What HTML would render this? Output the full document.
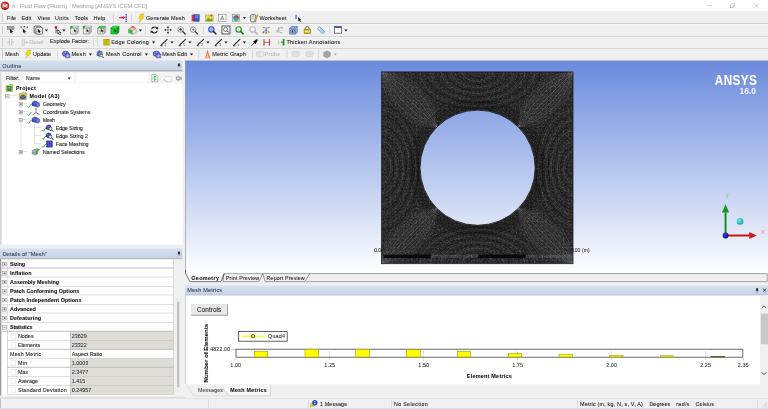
<!DOCTYPE html>
<html>
<head>
<meta charset="utf-8">
<title>Meshing</title>
<style>
html,body{margin:0;padding:0;background:#f0f0f0;overflow:hidden;}
body{width:768px;height:409px;position:relative;}
#w{position:absolute;left:0;top:0;width:1920px;height:1022.5px;transform:scale(0.4);transform-origin:0 0;filter:contrast(1.0001);font-family:"Liberation Sans",sans-serif;font-size:13.25px;color:#1c1c1c;background:#f0f0f0;overflow:hidden;-webkit-text-stroke:0.2px currentColor;}
#w div,#w span.a,#w svg{position:absolute;box-sizing:border-box;white-space:nowrap;}
#w svg{overflow:visible;}
.hdr{background:linear-gradient(#d5e1ef,#c3d3e6);}
</style>
</head>
<body>
<div id="w">
<!-- s_title -->
<div style="left:0px;top:0px;width:1920px;height:29px;background:#fff"></div>
<svg style="left:2.25px;top:3.75px;width:21px;height:21px" viewBox="0 0 18 18"><defs><radialGradient id="mg" cx="0.45" cy="0.3" r="0.75"><stop offset="0" stop-color="#ee3a30"/><stop offset="0.6" stop-color="#d21f18"/><stop offset="1" stop-color="#8e0f0c"/></radialGradient></defs><circle cx="9" cy="9" r="8.6" fill="url(#mg)"/><circle cx="9" cy="9" r="8.4" fill="none" stroke="#8a1610" stroke-width="0.9"/><ellipse cx="7.5" cy="5.5" rx="5" ry="3" fill="#fff" opacity="0.18"/><path d="M4 13.2V5h2.3L9 9.4 11.7 5H14v8.2h-2V8.5L9.6 12.3H8.4L6 8.5v4.7z" fill="#fff"/></svg>
<div style="left:28.5px;top:6.85px;font-size:14.5px;line-height:16.825px;color:#adadad;letter-spacing:-0.083px;">A : Fluid Flow (Fluent) - Meshing [ANSYS ICEM CFD]</div>
<div style="left:1768.5px;top:14.25px;width:10.5px;height:1px;background:#8a8a8a"></div>
<div style="left:1826px;top:11.5px;width:8.5px;height:8.5px;border:1px solid #8a8a8a"></div>
<div style="left:1828.75px;top:8.75px;width:8.5px;height:8.5px;border-top:1px solid #8a8a8a;border-right:1px solid #8a8a8a"></div>
<svg style="left:1886px;top:9px;width:11px;height:11px" viewBox="0 0 11 11"><path d="M0.5 0.5L10.5 10.5M10.5 0.5L0.5 10.5" stroke="#8a8a8a" stroke-width="1"/></svg>
<!-- s_toolbar -->
<div style="left:0px;top:29px;width:1920px;height:122px;background:#f0f0f0"></div>
<div style="left:0px;top:57.75px;width:1920px;height:1.75px;background:#c6c6c6"></div>
<div style="left:0px;top:59.5px;width:1920px;height:1.25px;background:#fafafa"></div>
<div style="left:0px;top:90.25px;width:1920px;height:1.75px;background:#c6c6c6"></div>
<div style="left:0px;top:92px;width:1920px;height:1.25px;background:#fafafa"></div>
<div style="left:0px;top:120px;width:1920px;height:1.75px;background:#c6c6c6"></div>
<div style="left:0px;top:121.75px;width:1920px;height:1.25px;background:#fafafa"></div>
<div style="left:0px;top:28.75px;width:1920px;height:1px;background:#e2e2e2"></div>
<div style="left:5px;top:34.75px;width:1.25px;height:20.5px;background:#9a9a9a"></div>
<div style="left:5px;top:65px;width:1.25px;height:20.5px;background:#9a9a9a"></div>
<div style="left:5px;top:95.25px;width:1.25px;height:20.5px;background:#9a9a9a"></div>
<div style="left:5px;top:125.25px;width:1.25px;height:20.5px;background:#9a9a9a"></div>
<div style="left:17.5px;top:37.025px;font-size:13.75px;line-height:15.95px;letter-spacing:0.085px;">File</div>
<div style="left:53.75px;top:37.025px;font-size:13.75px;line-height:15.95px;letter-spacing:0.328px;">Edit</div>
<div style="left:94px;top:37.025px;font-size:13.75px;line-height:15.95px;letter-spacing:0.36px;">View</div>
<div style="left:137.5px;top:37.025px;font-size:13.75px;line-height:15.95px;letter-spacing:0.735px;">Units</div>
<div style="left:186.5px;top:37.025px;font-size:13.75px;line-height:15.95px;letter-spacing:0.28px;">Tools</div>
<div style="left:234px;top:37.025px;font-size:13.75px;line-height:15.95px;letter-spacing:0.305px;">Help</div>
<div style="left:282.5px;top:34.5px;width:1px;height:21px;background:#b4b4b4"></div>
<svg style="left:297.5px;top:35px;width:21px;height:20px" viewBox="0 0 8.4 8"><path d="M0 3.6h4.4" stroke="#e02020" stroke-width="1.3"/><path d="M3.6 1.8L6 3.6 3.6 5.4z" fill="#e02020"/><path d="M7 0v8" stroke="#2030e0" stroke-width="1.3" stroke-dasharray="1.6 0.7"/></svg>
<div style="left:329px;top:34.5px;width:1px;height:21px;background:#b4b4b4"></div>
<svg style="left:344.5px;top:34.5px;width:16px;height:21px" viewBox="0 0 6.4 8.4"><path d="M2.6 0H6L4.4 2.9H6.2L1.2 8.4 2.4 4.6H0.6z" fill="#f5d90a" stroke="#b79a00" stroke-width="0.35"/></svg>
<div style="left:365px;top:37.025px;font-size:13.75px;line-height:15.95px;letter-spacing:0.17px;">Generate Mesh</div>
<svg style="left:478.5px;top:35px;width:20px;height:20px" viewBox="0 0 8 8"><rect x="0" y="0.6" width="3" height="6.8" fill="#d43a3a"/><rect x="2.4" y="0.6" width="5.2" height="6.8" fill="#3a56d4" stroke="#1c2c80" stroke-width="0.4"/><path d="M3.6 2h3M3.6 3.4h3" stroke="#cfd6ff" stroke-width="0.5"/></svg>
<svg style="left:512.5px;top:35px;width:21px;height:20px" viewBox="0 0 8.4 8"><rect x="0.3" y="1" width="7.6" height="6.4" fill="#e8d84a" stroke="#9c8e20" stroke-width="0.4"/><path d="M0.6 7L3 3.4 5 5.6 6.4 4.2 7.6 7z" fill="#5aa83c"/><circle cx="6" cy="1.6" r="1.1" fill="#e24a3a"/></svg>
<svg style="left:545px;top:35px;width:21.5px;height:20px" viewBox="0 0 8.6 8"><rect x="0.4" y="0.6" width="7.6" height="6.8" fill="#fafafa" stroke="#8a8a8a" stroke-width="0.6"/><path d="M2.4 6.2L4.2 1.8 6 6.2M3 4.8h2.4" stroke="#555" stroke-width="0.6" fill="none"/></svg>
<svg style="left:580px;top:35px;width:20.5px;height:20px" viewBox="0 0 8.2 8"><rect x="0.3" y="0.6" width="7.4" height="6.8" fill="#dcdcdc" stroke="#777" stroke-width="0.5"/><circle cx="4" cy="4" r="2.7" fill="#3b7fe0"/><path d="M4 4L4 1.3A2.7 2.7 0 0 1 6.5 5z" fill="#e03b3b"/><path d="M4 4L6.5 5A2.7 2.7 0 0 1 1.7 5.4z" fill="#3bc04a"/></svg>
<svg style="left:606.5px;top:43.25px;width:8px;height:4.5px" viewBox="0 0 3.2 1.8"><path d="M0 0H3.2L1.6 1.8z" fill="#111"/></svg>
<svg style="left:624.5px;top:34.5px;width:20.5px;height:21px" viewBox="0 0 8.2 8.4"><rect x="0.6" y="0.8" width="5.2" height="7" rx="0.8" fill="#f4f4f4" stroke="#333" stroke-width="0.7"/><path d="M1.8 2.8h2.8M1.8 4.4h2.8" stroke="#777" stroke-width="0.5"/><path d="M4.2 6.8L7.4 0.6l0.8 0.5L5 7.4z" fill="#e8c420" stroke="#6a5a00" stroke-width="0.3"/></svg>
<div style="left:649px;top:37.025px;font-size:13.75px;line-height:15.95px;letter-spacing:0.17px;">Worksheet</div>
<svg style="left:737.5px;top:36px;width:17.5px;height:19px" viewBox="0 0 7 7.6"><rect x="0.2" y="0.4" width="1.3" height="4.2" fill="#4a5cf0"/><path d="M2.8 2.6L6.2 5.8 4.9 5.9 5.6 7.3 4.9 7.6 4.2 6.2 3.2 7z" fill="#111"/></svg>
<svg style="left:17px;top:65.25px;width:20px;height:20px" viewBox="0 0 8 8"><rect x="0.4" y="0.4" width="6.8" height="3" fill="#9a9a9a" stroke="#555" stroke-width="0.4"/><path d="M1.4 1.2h4.8M1.4 2.4h4.8" stroke="#ddd" stroke-width="0.4" stroke-dasharray="0.8 0.6"/><path d="M3.2 2.8L6.6 6 5.1 6 5.8 7.4 5.1 7.7 4.4 6.3 3.2 7.1z" fill="#222"/></svg>
<svg style="left:49.5px;top:65.25px;width:21.5px;height:20px" viewBox="0 0 8.6 8"><path d="M1.2 1.4L2.4 2.6M7.2 1.4L6 2.6M4.3 0.6V2" stroke="#555" stroke-width="0.5"/><rect x="0.5" y="0.5" width="1.2" height="1.2" fill="#444"/><rect x="6.8" y="0.5" width="1.2" height="1.2" fill="#444"/><rect x="3.7" y="0" width="1.2" height="1.1" fill="#444"/><path d="M3 2.8L6.2 5.8 4.8 5.8 5.5 7.2 4.8 7.5 4.1 6.1 3 6.9z" fill="#1c1c1c"/></svg>
<svg style="left:84px;top:64.25px;width:24px;height:22px" viewBox="0 0 9.6 8.8"><rect x="0.5" y="0.5" width="6.6" height="7" rx="1" fill="#f2f2f2" stroke="#333" stroke-width="0.7"/><rect x="2.3" y="1.6" width="6.6" height="7" rx="1" fill="#f2f2f2" stroke="#333" stroke-width="0.7"/><path d="M4.2 3.2L7.4 6.2 6 6.2 6.6 7.5 6 7.7 5.4 6.5 4.2 7.2z" fill="#111"/></svg>
<svg style="left:111.5px;top:74px;width:8px;height:4.5px" viewBox="0 0 3.2 1.8"><path d="M0 0H3.2L1.6 1.8z" fill="#111"/></svg>
<svg style="left:136px;top:64.75px;width:18.5px;height:21.5px" viewBox="0 0 7.4 8.6"><rect x="0.4" y="0.2" width="2.4" height="2.4" fill="#c81e2a"/><path d="M1.6 2.4V7.4" stroke="#333" stroke-width="0.7"/><path d="M1.6 4.6H3.4" stroke="#333" stroke-width="0.6"/><path d="M3.4 3.6V7.6H5.2M3.4 3.6L6.2 6.4" fill="none" stroke="#222" stroke-width="0.7"/><rect x="4.6" y="6.4" width="1.8" height="2" fill="#fff" stroke="#222" stroke-width="0.5"/></svg>
<svg style="left:156px;top:74px;width:8px;height:4.5px" viewBox="0 0 3.2 1.8"><path d="M0 0H3.2L1.6 1.8z" fill="#111"/></svg>
<svg style="left:174.5px;top:64.25px;width:23.5px;height:22px" viewBox="0 0 9.4 8.8"><path d="M0.5 2.6L2.4 0.6H8.6V6.4L6.8 8.4H0.5z" fill="#e9e9e9" stroke="#6e6e6e" stroke-width="0.55" stroke-linejoin="round"/><path d="M0.5 2.6L2.4 0.6H8.6L6.8 2.6z" fill="#d6d6d6"/><path d="M6.8 2.6L8.6 0.6V6.4L6.8 8.4z" fill="#bdbdbd"/><path d="M0.5 2.6H6.8V8.4M6.8 2.6L8.6 0.6" fill="none" stroke="#6e6e6e" stroke-width="0.45"/><rect x="0.2" y="0.4" width="2.4" height="2.4" fill="#19b52b"/><path d="M4 3.4L6.4 5.7 5.3 5.7 5.8 6.8 5.3 7 4.8 5.9 4 6.5z" fill="#111"/></svg>
<svg style="left:206.5px;top:64.25px;width:23.5px;height:22px" viewBox="0 0 9.4 8.8"><path d="M0.5 2.6L2.4 0.6H8.6V6.4L6.8 8.4H0.5z" fill="#e9e9e9" stroke="#6e6e6e" stroke-width="0.55" stroke-linejoin="round"/><path d="M0.5 2.6L2.4 0.6H8.6L6.8 2.6z" fill="#d6d6d6"/><path d="M6.8 2.6L8.6 0.6V6.4L6.8 8.4z" fill="#bdbdbd"/><path d="M0.5 2.6H6.8V8.4M6.8 2.6L8.6 0.6" fill="none" stroke="#6e6e6e" stroke-width="0.45"/><path d="M0.3 2.6L2.2 0.6" stroke="#19b52b" stroke-width="1.3"/><rect x="0.1" y="0.2" width="2" height="2" fill="#19b52b"/><path d="M3.6 2.8V8.2" stroke="#888" stroke-width="0.4"/><path d="M4 3.4L6.4 5.7 5.3 5.7 5.8 6.8 5.3 7 4.8 5.9 4 6.5z" fill="#111"/></svg>
<div style="left:238.5px;top:61.75px;width:29.5px;height:27px;background:#fcfcfc;border:1px solid #d2d2d2"></div>
<svg style="left:242.5px;top:64.25px;width:23.5px;height:22px" viewBox="0 0 9.4 8.8"><path d="M0.5 2.6L2.4 0.6H8.6V6.4L6.8 8.4H0.5z" fill="#e9e9e9" stroke="#6e6e6e" stroke-width="0.55" stroke-linejoin="round"/><path d="M0.5 2.6L2.4 0.6H8.6L6.8 2.6z" fill="#d6d6d6"/><path d="M6.8 2.6L8.6 0.6V6.4L6.8 8.4z" fill="#bdbdbd"/><path d="M0.5 2.6H6.8V8.4M6.8 2.6L8.6 0.6" fill="none" stroke="#6e6e6e" stroke-width="0.45"/><path d="M0.5 2.6L2.4 0.6H8.6L6.8 2.6z" fill="#22c636"/><path d="M3.4 2.8V8.2M0.6 5.2H6.8" stroke="#777" stroke-width="0.4"/><path d="M4 3.4L6.4 5.7 5.3 5.7 5.8 6.8 5.3 7 4.8 5.9 4 6.5z" fill="#111"/></svg>
<svg style="left:275.5px;top:64.25px;width:23.5px;height:22px" viewBox="0 0 9.4 8.8"><path d="M0.5 2.6L2.4 0.6H8.6V6.4L6.8 8.4H0.5z" fill="#18d030" stroke="#0b7a1a" stroke-width="0.55" stroke-linejoin="round"/><path d="M0.5 2.6L2.4 0.6H8.6L6.8 2.6z" fill="#3de050"/><path d="M6.8 2.6L8.6 0.6V6.4L6.8 8.4z" fill="#0f9a22"/><path d="M0.5 2.6H6.8V8.4M6.8 2.6L8.6 0.6" fill="none" stroke="#0b7a1a" stroke-width="0.45"/><path d="M4 3.4L6.4 5.7 5.3 5.7 5.8 6.8 5.3 7 4.8 5.9 4 6.5z" fill="#111"/></svg>
<svg style="left:319.5px;top:64.25px;width:22px;height:22px" viewBox="0 0 8.8 8.8"><path d="M0.6 3.4L4 2 8 3.2V7L4.6 8.6 0.6 7.2z" fill="#f4f4f4" stroke="#666" stroke-width="0.4"/><path d="M0.6 3.4L4.6 4.6V8.6L0.6 7.2z" fill="#2fb84a"/><path d="M4.6 4.6L8 3.2V7L4.6 8.6z" fill="#e8e8e8" stroke="#666" stroke-width="0.3"/><path d="M2.2 1.4L5 0.4 7.4 1.6 4.6 2.8z" fill="#e04848"/><path d="M0.6 3.4L4 2 8 3.2 4.6 4.6z" fill="#f8d0d0" stroke="#c44" stroke-width="0.3"/></svg>
<svg style="left:346.5px;top:74px;width:8px;height:4.5px" viewBox="0 0 3.2 1.8"><path d="M0 0H3.2L1.6 1.8z" fill="#111"/></svg>
<div style="left:363px;top:64.75px;width:1px;height:21px;background:#b4b4b4"></div>
<svg style="left:375.5px;top:65.25px;width:20px;height:20px" viewBox="0 0 8 8"><path d="M6.6 2.4A3 3 0 0 0 1.2 3.2" fill="none" stroke="#222" stroke-width="1.2"/><path d="M5.2 2.8L7.8 0.8 7.8 3.6z" fill="#222"/><path d="M1.4 5.6A3 3 0 0 0 6.8 4.8" fill="none" stroke="#222" stroke-width="1.2"/><path d="M2.8 5.2L0.2 7.2 0.2 4.4z" fill="#222"/></svg>
<svg style="left:409.5px;top:65.25px;width:20px;height:20px" viewBox="0 0 8 8"><path d="M4 0L5.3 1.8H2.7zM4 8L5.3 6.2H2.7zM0 4L1.8 2.7V5.3zM8 4L6.2 2.7V5.3z" fill="#222"/><path d="M4 1.6V6.4M1.6 4H6.4" stroke="#222" stroke-width="0.7" stroke-dasharray="0.9 0.6"/></svg>
<svg style="left:442.5px;top:64.75px;width:21.5px;height:21.5px" viewBox="0 0 8.6 8.6"><circle cx="3.4" cy="3.4" r="2.8" fill="#fafafa" stroke="#7a7a7a" stroke-width="0.8"/><circle cx="3.4" cy="3.4" r="1.2" fill="#222"/><path d="M5.5 5.5L8 8" stroke="#333" stroke-width="1.3" stroke-linecap="round"/></svg>
<svg style="left:474px;top:64.75px;width:21.5px;height:21.5px" viewBox="0 0 8.6 8.6"><rect x="0.2" y="0.2" width="4" height="4" fill="none" stroke="#999" stroke-width="0.35" stroke-dasharray="0.8 0.5"/><circle cx="3.6" cy="3.6" r="2.7" fill="#fafafa" stroke="#7a7a7a" stroke-width="0.8"/><path d="M3.6 2.2V5M2.2 3.6H5" stroke="#444" stroke-width="0.6"/><path d="M5.6 5.6L8.1 8.1" stroke="#333" stroke-width="1.3" stroke-linecap="round"/></svg>
<div style="left:508.5px;top:64.75px;width:1px;height:21px;background:#b4b4b4"></div>
<svg style="left:520px;top:64.75px;width:21px;height:21px" viewBox="0 0 8.4 8.4"><circle cx="3.4" cy="3.4" r="2.7" fill="#9fb4ec" stroke="#3a5ec0" stroke-width="1.1"/><path d="M5.4 5.4L7.9 7.9" stroke="#333" stroke-width="1.5" stroke-linecap="round"/></svg>
<svg style="left:553.5px;top:64.25px;width:22px;height:22px" viewBox="0 0 8.8 8.8"><rect x="0.4" y="0.4" width="8" height="8" fill="#fafafa" stroke="#333" stroke-width="0.8"/><circle cx="4" cy="3.8" r="2" fill="none" stroke="#444" stroke-width="0.7"/><path d="M5.4 5.2L7.2 7" stroke="#333" stroke-width="1"/></svg>
<svg style="left:587.5px;top:64.75px;width:21px;height:21px" viewBox="0 0 8.4 8.4"><circle cx="3.4" cy="3.4" r="2.7" fill="#e9f7ea" stroke="#1e9a2c" stroke-width="1.1"/><path d="M5.4 5.4L7.9 7.9" stroke="#146c1e" stroke-width="1.5" stroke-linecap="round"/></svg>
<svg style="left:622.5px;top:64.75px;width:21px;height:21px" viewBox="0 0 8.4 8.4"><circle cx="3.4" cy="3.4" r="2.7" fill="#f6f6f6" stroke="#b8b8b8" stroke-width="1.1"/><path d="M5.4 5.4L7.9 7.9" stroke="#b8b8b8" stroke-width="1.5" stroke-linecap="round"/></svg>
<svg style="left:655px;top:65.25px;width:21px;height:20px" viewBox="0 0 8.4 8"><path d="M1 1.6h2.6M4.6 1.6h2.8" stroke="#4b8a4b" stroke-width="1.1" stroke-dasharray="0.8 0.4"/><path d="M4.2 2V7M1.4 6L4.2 4 7 6" stroke="#444" stroke-width="0.5" fill="none"/><circle cx="4.2" cy="4" r="1" fill="#2e8ee0"/><circle cx="1.4" cy="6.2" r="0.95" fill="#e03434"/><circle cx="7" cy="6.2" r="0.95" fill="#e0a020"/><circle cx="4.2" cy="7" r="0.9" fill="#30b040"/></svg>
<svg style="left:689px;top:66.25px;width:21.5px;height:18.5px" viewBox="0 0 8.6 7.4"><path d="M1.6 6.4L3.2 0.8M0.4 4.6h3.2" stroke="#a6a6a6" stroke-width="0.9" fill="none"/><path d="M6.6 1.4A2.6 2.6 0 1 0 6.8 6" stroke="#a6a6a6" stroke-width="0.9" fill="none"/><path d="M6 0.4L7.8 1.6 6 2.8z" fill="#a6a6a6"/></svg>
<svg style="left:722.5px;top:64.75px;width:21.5px;height:21.5px" viewBox="0 0 8.6 8.6"><path d="M0.4 2.2L2.4 0.4H8.2V6.2L6.2 8.2H0.4z" fill="#8fb0e6" stroke="#3a5a9c" stroke-width="0.5"/><path d="M0.4 2.2H6.2V8.2M6.2 2.2L8.2 0.4" fill="none" stroke="#3a5a9c" stroke-width="0.4"/><ellipse cx="3.4" cy="5.2" rx="2.4" ry="1.5" fill="#e8f0ff" stroke="#1c2c50" stroke-width="0.5"/><circle cx="3.4" cy="5.2" r="1" fill="#1c2c50"/></svg>
<svg style="left:759px;top:65.25px;width:18px;height:20px" viewBox="0 0 7.2 8"><path d="M1.8 3.6V2.4A1.8 1.8 0 0 1 5.4 2.4V3.6" fill="none" stroke="#555" stroke-width="0.9"/><rect x="0.5" y="3.4" width="6.2" height="4.2" fill="#d8c82a" stroke="#5a5200" stroke-width="0.5"/><path d="M0.8 5.2h5.6" stroke="#f6ee90" stroke-width="0.8"/></svg>
<svg style="left:792px;top:64.75px;width:21.5px;height:21.5px" viewBox="0 0 8.6 8.6"><path d="M0.6 2.8L2.8 0.6 8 5.8 5.8 8z" fill="#9fd0f0" stroke="#5a8ab0" stroke-width="0.5"/><path d="M0.4 0.4L2.2 2.2" stroke="#999" stroke-width="0.5"/><circle cx="2.4" cy="2.4" r="0.6" fill="#fff"/></svg>
<div style="left:823.5px;top:64.75px;width:1px;height:21px;background:#b4b4b4"></div>
<svg style="left:835px;top:65.25px;width:20px;height:19px" viewBox="0 0 8 7.6"><rect x="0.4" y="0.4" width="7" height="6.8" fill="#fdfdfd" stroke="#40406a" stroke-width="0.7"/><rect x="0.4" y="0.4" width="7" height="1.6" fill="#4a56a8"/></svg>
<svg style="left:860.5px;top:74px;width:8px;height:4.5px" viewBox="0 0 3.2 1.8"><path d="M0 0H3.2L1.6 1.8z" fill="#111"/></svg>
<svg style="left:17.5px;top:95.5px;width:16.5px;height:20px" viewBox="0 0 6.6 8"><path d="M2.2 1v6.2M4.4 0.6v6.8" stroke="#b0b0b0" stroke-width="0.9" stroke-dasharray="1.2 0.5"/><path d="M0.4 3.2L2 4.2 0.4 5.2zM6.4 3.2L4.8 4.2 6.4 5.2z" fill="#b8b8b8"/></svg>
<svg style="left:52.5px;top:97px;width:17.5px;height:17.5px" viewBox="0 0 7 7"><path d="M1 0.6h2.4V6.4H1z" fill="#e6e6e6" stroke="#bdbdbd" stroke-width="0.5"/><path d="M3 3.4h3.4M5 2L6.6 3.4 5 4.8" stroke="#b4b4b4" stroke-width="0.7" fill="none"/></svg>
<div style="left:73px;top:97.525px;font-size:13.75px;line-height:15.95px;color:#b9b9b9;">Reset</div>
<div style="left:125px;top:96.025px;font-size:13.75px;line-height:15.95px;color:#222;letter-spacing:0.08px;">Explode Factor:</div>
<div style="left:233.5px;top:95px;width:1px;height:21px;background:#b4b4b4"></div>
<div style="left:242.5px;top:95px;width:1px;height:21px;background:#b4b4b4"></div>
<svg style="left:257.5px;top:96.5px;width:16.5px;height:17.5px" viewBox="0 0 6.6 7"><rect x="0.2" y="0.2" width="6.2" height="6.4" fill="#a6a000"/><rect x="0.9" y="0.9" width="2.1" height="5" fill="#c8c400"/><rect x="3.6" y="0.9" width="2.1" height="5" fill="#c8c400"/></svg>
<div style="left:278px;top:97.525px;font-size:13.75px;line-height:15.95px;letter-spacing:0.565px;">Edge Coloring</div>
<svg style="left:380px;top:103.75px;width:8px;height:4.5px" viewBox="0 0 3.2 1.8"><path d="M0 0H3.2L1.6 1.8z" fill="#111"/></svg>
<svg style="left:400px;top:95.5px;width:21px;height:20px" viewBox="0 0 8.4 8"><path d="M0.6 7.2L7.4 0.8" stroke="#222" stroke-width="1.1"/><path d="M0.4 7.4h2.4" stroke="#222" stroke-width="0.6"/><text x="4.6" y="7.8" font-size="3.6" font-family="Liberation Sans" fill="#333">2</text></svg>
<svg style="left:425.5px;top:103.75px;width:8px;height:4.5px" viewBox="0 0 3.2 1.8"><path d="M0 0H3.2L1.6 1.8z" fill="#111"/></svg>
<svg style="left:446px;top:95.5px;width:21px;height:20px" viewBox="0 0 8.4 8"><path d="M0.6 7.2L7.4 0.8" stroke="#222" stroke-width="1.1"/><path d="M0.4 7.4h2.4" stroke="#222" stroke-width="0.6"/><text x="4.6" y="7.8" font-size="3.6" font-family="Liberation Sans" fill="#333">1</text></svg>
<svg style="left:470.5px;top:103.75px;width:8px;height:4.5px" viewBox="0 0 3.2 1.8"><path d="M0 0H3.2L1.6 1.8z" fill="#111"/></svg>
<svg style="left:491px;top:95.5px;width:21px;height:20px" viewBox="0 0 8.4 8"><path d="M0.6 7.2L7.4 0.8" stroke="#222" stroke-width="1.1"/><path d="M0.4 7.4h2.4" stroke="#222" stroke-width="0.6"/><text x="4.6" y="7.8" font-size="3.6" font-family="Liberation Sans" fill="#333">2</text></svg>
<svg style="left:515.5px;top:103.75px;width:8px;height:4.5px" viewBox="0 0 3.2 1.8"><path d="M0 0H3.2L1.6 1.8z" fill="#111"/></svg>
<svg style="left:536px;top:95.5px;width:21px;height:20px" viewBox="0 0 8.4 8"><path d="M0.6 7.2L7.4 0.8" stroke="#222" stroke-width="1.1"/><path d="M0.4 7.4h2.4" stroke="#222" stroke-width="0.6"/><text x="4.6" y="7.8" font-size="3.6" font-family="Liberation Sans" fill="#333">3</text></svg>
<svg style="left:561px;top:103.75px;width:8px;height:4.5px" viewBox="0 0 3.2 1.8"><path d="M0 0H3.2L1.6 1.8z" fill="#111"/></svg>
<svg style="left:581.5px;top:95.5px;width:21px;height:20px" viewBox="0 0 8.4 8"><path d="M0.6 7.2L7.4 0.8" stroke="#222" stroke-width="1.1"/><path d="M0.4 7.4h2.4" stroke="#222" stroke-width="0.6"/><text x="4.6" y="7.8" font-size="3.6" font-family="Liberation Sans" fill="#333">x</text></svg>
<svg style="left:606.5px;top:103.75px;width:8px;height:4.5px" viewBox="0 0 3.2 1.8"><path d="M0 0H3.2L1.6 1.8z" fill="#111"/></svg>
<svg style="left:626.5px;top:95.5px;width:18.5px;height:20px" viewBox="0 0 7.4 8"><path d="M0.4 7.6L3.4 4.4" stroke="#111" stroke-width="0.7"/><path d="M2.2 3.4L4.6 5.8 7 1.6 6.2 0.6z" fill="#111"/></svg>
<svg style="left:657.5px;top:96.5px;width:18px;height:18px" viewBox="0 0 7.2 7.2"><path d="M0.8 0.2V7M6.2 0.2V7" stroke="#c03838" stroke-width="1.1"/><path d="M0.8 3.6H6.2" stroke="#555" stroke-width="0.7"/></svg>
<svg style="left:693.5px;top:97px;width:19px;height:17px" viewBox="0 0 7.6 6.8"><path d="M0.8 0.8V6M0.8 3.4H5" stroke="#b8cdb8" stroke-width="0.8"/><path d="M6 0.2V6.6" stroke="#149a24" stroke-width="1.8"/><path d="M3.4 3.4H6" stroke="#149a24" stroke-width="0.9"/></svg>
<div style="left:716px;top:97.525px;font-size:13.75px;line-height:15.95px;letter-spacing:0.6px;">Thicken Annotations</div>
<div style="left:13px;top:127.525px;font-size:13.75px;line-height:15.95px;letter-spacing:0.22px;">Mesh</div>
<svg style="left:62px;top:125px;width:16px;height:21px" viewBox="0 0 6.4 8.4"><path d="M2.6 0H6L4.4 2.9H6.2L1.2 8.4 2.4 4.6H0.6z" fill="#f5d90a" stroke="#b79a00" stroke-width="0.35"/></svg>
<div style="left:82.5px;top:127.525px;font-size:13.75px;line-height:15.95px;letter-spacing:0.193px;">Update</div>
<div style="left:142.5px;top:125px;width:1px;height:21px;background:#b4b4b4"></div>
<svg style="left:155px;top:125.5px;width:21.5px;height:20px" viewBox="0 0 8.6 8"><ellipse cx="3.6" cy="3.4" rx="3.3" ry="2.7" fill="#5a62c4" stroke="#262c78" stroke-width="0.5"/><path d="M1.2 2.2Q3.6 0.8 6 2.2M0.6 3.8Q3.6 5.2 6.6 3.8M3.6 0.8V6" stroke="#c4c9f6" stroke-width="0.4" fill="none"/><path d="M3.6 3.6h4.4v3.8H3.6z" fill="#7a82dc" stroke="#262c78" stroke-width="0.5"/><path d="M3.6 5.5h4.4M5.8 3.6v3.8" stroke="#dfe2fb" stroke-width="0.4"/></svg>
<div style="left:178.5px;top:127.525px;font-size:13.75px;line-height:15.95px;letter-spacing:0.72px;">Mesh</div>
<svg style="left:222px;top:133.75px;width:8px;height:4.5px" viewBox="0 0 3.2 1.8"><path d="M0 0H3.2L1.6 1.8z" fill="#111"/></svg>
<svg style="left:241px;top:125px;width:19px;height:21px" viewBox="0 0 7.6 8.4"><path d="M0.6 2.2L3 0.6 5.8 1.8V5L3.4 6.6 0.6 5.4z" fill="#5a62c4" stroke="#262c78" stroke-width="0.4"/><path d="M3.4 3.4L5.8 1.8V5L3.4 6.6z" fill="#2fb23c"/><path d="M0.6 2.2L3.4 3.4 5.8 1.8M3.4 3.4V6.6" stroke="#cfd3f8" stroke-width="0.35" fill="none"/><circle cx="5" cy="5.6" r="1.2" fill="#f2fff2" stroke="#333" stroke-width="0.5"/><path d="M5.9 6.5L7.4 8.1" stroke="#222" stroke-width="0.9"/></svg>
<div style="left:265px;top:127.525px;font-size:13.75px;line-height:15.95px;letter-spacing:0.603px;">Mesh Control</div>
<svg style="left:362px;top:133.75px;width:8px;height:4.5px" viewBox="0 0 3.2 1.8"><path d="M0 0H3.2L1.6 1.8z" fill="#111"/></svg>
<svg style="left:382px;top:125.5px;width:21.5px;height:20px" viewBox="0 0 8.6 8"><ellipse cx="3.6" cy="3.4" rx="3.3" ry="2.7" fill="#5a62c4" stroke="#262c78" stroke-width="0.5"/><path d="M1.2 2.2Q3.6 0.8 6 2.2M0.6 3.8Q3.6 5.2 6.6 3.8M3.6 0.8V6" stroke="#c4c9f6" stroke-width="0.4" fill="none"/><path d="M3.6 3.6h4.4v3.8H3.6z" fill="#7a82dc" stroke="#262c78" stroke-width="0.5"/><path d="M3.6 5.5h4.4M5.8 3.6v3.8" stroke="#dfe2fb" stroke-width="0.4"/></svg>
<div style="left:405.5px;top:127.525px;font-size:13.75px;line-height:15.95px;letter-spacing:0.095px;">Mesh Edit</div>
<svg style="left:475px;top:133.75px;width:8px;height:4.5px" viewBox="0 0 3.2 1.8"><path d="M0 0H3.2L1.6 1.8z" fill="#111"/></svg>
<div style="left:494.5px;top:125px;width:1px;height:21px;background:#b4b4b4"></div>
<svg style="left:509.5px;top:125px;width:18.5px;height:21px" viewBox="0 0 7.4 8.4"><path d="M0 8.3C1.4 8 2.4 4.6 3.2 0.4h0.8C4.8 4.6 5.8 8 7.4 8.3z" fill="#f4683a"/><path d="M1.2 8.3C2.2 7.4 2.8 5 3.2 2.8L4.2 6 5.6 8.3z" fill="#ffb59a"/></svg>
<div style="left:530.5px;top:127.525px;font-size:13.75px;line-height:15.95px;letter-spacing:0.42px;">Metric Graph</div>
<div style="left:631px;top:125px;width:1px;height:21px;background:#b4b4b4"></div>
<svg style="left:641px;top:128px;width:19.5px;height:15px" viewBox="0 0 7.8 6"><rect x="0.3" y="0.4" width="7" height="5" rx="0.8" fill="#ececec" stroke="#bdbdbd" stroke-width="0.5"/><path d="M2.6 0.4v5M1 2h1M1 3.4h1" stroke="#c4c4c4" stroke-width="0.4"/></svg>
<div style="left:661.5px;top:127.525px;font-size:13.75px;line-height:15.95px;color:#bcbcbc;letter-spacing:0.663px;">Probe</div>
<div style="left:717px;top:125px;width:1px;height:21px;background:#b4b4b4"></div>
<svg style="left:729.5px;top:128px;width:19.5px;height:15px" viewBox="0 0 7.8 6"><rect x="0.3" y="0.4" width="7" height="5" rx="1" fill="#e8e8e8" stroke="#c0c0c0" stroke-width="0.5"/><path d="M1.4 2h4.6M1.4 3.6h4.6" stroke="#c8c8c8" stroke-width="0.5"/></svg>
<svg style="left:764px;top:128px;width:19.5px;height:15px" viewBox="0 0 7.8 6"><rect x="0.3" y="0.4" width="7" height="5" rx="1" fill="#e8e8e8" stroke="#c0c0c0" stroke-width="0.5"/><path d="M1.4 2h4.6M1.4 3.6h4.6" stroke="#c8c8c8" stroke-width="0.5"/></svg>
<div style="left:794.5px;top:125px;width:1px;height:21px;background:#b4b4b4"></div>
<svg style="left:807.5px;top:125.5px;width:19px;height:20px" viewBox="0 0 7.6 8"><path d="M3.8 0.4L7.2 2.2V5.8L3.8 7.6 0.4 5.8V2.2z" fill="#a4a4a4" stroke="#8c8c8c" stroke-width="0.4"/></svg>
<svg style="left:834px;top:133.75px;width:8px;height:4.5px" viewBox="0 0 3.2 1.8"><path d="M0 0H3.2L1.6 1.8z" fill="#a8a8a8"/></svg>
<!-- s_left -->
<div style="left:0px;top:150px;width:462.5px;height:843.5px;background:#f0f0f0"></div>
<div class="hdr" style="left:0px;top:150.75px;width:455.75px;height:25px;"></div>
<div style="left:0px;top:175.25px;width:455.75px;height:3px;background:linear-gradient(#9fa3a8,#c9c9c9)"></div>
<div style="left:5.75px;top:155.725px;font-size:14.25px;line-height:16.525px;color:#37455a;letter-spacing:0.408px;">Outline</div>
<svg style="left:441.5px;top:157.5px;width:10px;height:11px" viewBox="0 0 4 4.4"><path d="M1.2 0.2h2v2.2l0.6 0.6H0.6l0.6-0.6z" fill="#333"/><path d="M2.2 3v1.4" stroke="#333" stroke-width="0.5"/></svg>
<div style="left:1.5px;top:179px;width:454.25px;height:432px;background:#fff;border-left:1.5px solid #6e6e6e;border-top:1px solid #a8a8a8"></div>
<div style="left:3px;top:180px;width:452.5px;height:27.5px;background:#f3f3f3"></div>
<div style="left:15px;top:187.175px;font-size:13.5px;line-height:15.65px;color:#222;letter-spacing:-0.035px;">Filter:</div>
<div style="left:59.5px;top:181.5px;width:124px;height:24px;background:#fff"></div>
<div style="left:65px;top:189px;font-size:12.5px;line-height:14.5px;color:#222;letter-spacing:0.665px;">Name</div>
<svg style="left:169px;top:193.75px;width:8px;height:4.5px" viewBox="0 0 3.2 1.8"><path d="M0 0H3.2L1.6 1.8z" fill="#111"/></svg>
<div style="left:190px;top:181.5px;width:180px;height:24px;background:#fff"></div>
<svg style="left:379px;top:185.5px;width:16.5px;height:19px" viewBox="0 0 6.6 7.6"><path d="M0.3 0.3H4.6L6.2 1.9V7.3H0.3z" fill="#fafafa" stroke="#777" stroke-width="0.5"/><path d="M3.2 1.6V6M1.8 3L3.2 1.6 4.6 3M1.8 4.6L3.2 6 4.6 4.6" stroke="#22a62e" stroke-width="0.8" fill="none"/></svg>
<svg style="left:408.5px;top:187.5px;width:21px;height:17px" viewBox="0 0 8.4 6.8"><path d="M0.4 4.2L3.2 1 7.6 1.4 8 6.4H3z" fill="#fdfdfd" stroke="#c9c9d4" stroke-width="0.6"/><path d="M0.4 4.2L3 6.4" stroke="#b0b0c0" stroke-width="0.7"/></svg>
<svg style="left:438.5px;top:186.5px;width:17.5px;height:17.5px" viewBox="0 0 7 7"><path d="M2.6 0.6V1.8M2.6 5.2V6.4M0.8 2.2H4.4V4.8H0.8z" fill="none" stroke="#555" stroke-width="0.55"/><path d="M4.8 2.4L6.4 3.5 4.8 4.6" fill="none" stroke="#555" stroke-width="0.55"/></svg>
<div style="left:18.5px;top:244.75px;width:1px;height:0px;"></div>
<div style="left:23.5px;top:239.25px;width:20px;height:1px;background:#b9b9b9;"></div>
<div style="left:52px;top:249.75px;width:1px;height:130px;background:#b9b9b9;"></div>
<div style="left:57.5px;top:259.25px;width:10px;height:1px;background:#b9b9b9;"></div>
<div style="left:57.5px;top:279.25px;width:10px;height:1px;background:#b9b9b9;"></div>
<div style="left:57.5px;top:299.25px;width:10px;height:1px;background:#b9b9b9;"></div>
<div style="left:57.5px;top:379.25px;width:10px;height:1px;background:#b9b9b9;"></div>
<div style="left:85px;top:309.75px;width:1px;height:50px;background:#b9b9b9;"></div>
<div style="left:85px;top:319.25px;width:17.5px;height:1px;background:#b9b9b9;"></div>
<div style="left:85px;top:339.25px;width:17.5px;height:1px;background:#b9b9b9;"></div>
<div style="left:85px;top:359.25px;width:17.5px;height:1px;background:#b9b9b9;"></div>
<svg style="left:13.5px;top:209.75px;width:19px;height:20px" viewBox="0 0 7.6 8"><path d="M0.4 1.6h2.4l0.8-1h3.4v6.8H0.4z" fill="#d8cf4a" stroke="#8a8420" stroke-width="0.5"/><rect x="2" y="2.6" width="3.6" height="4" fill="#1f8f86" stroke="#0c4a46" stroke-width="0.4"/><path d="M2.8 3.8h2" stroke="#bff" stroke-width="0.5"/></svg>
<div style="left:40px;top:211.925px;font-size:13.5px;line-height:15.65px;color:#111;font-weight:bold;letter-spacing:0.57px;">Project</div>
<svg style="left:13px;top:234.5px;width:10.5px;height:10.5px" viewBox="0 0 4.2 4.2"><rect x="0.3" y="0.3" width="3.6" height="3.6" fill="#fff" stroke="#8c8c8c" stroke-width="0.55"/><path d="M1 2.1H3.2" stroke="#333" stroke-width="0.55"/></svg>
<svg style="left:46.5px;top:229.75px;width:20px;height:20px" viewBox="0 0 8 8"><path d="M0.4 1.8h2.4l0.8-1h3.8v6.6H0.4z" fill="#d8cf4a" stroke="#8a8420" stroke-width="0.5"/><path d="M1.6 4.2L4 3l2.6 1v2L4.2 7.2 1.6 6.2z" fill="#3f49b8" stroke="#1c2468" stroke-width="0.4"/><path d="M1.6 4.2L4.2 5.2 6.6 4M4.2 5.2v2" stroke="#c6ccf8" stroke-width="0.35" fill="none"/></svg>
<div style="left:74px;top:231.925px;font-size:13.5px;line-height:15.65px;color:#111;font-weight:bold;letter-spacing:0.65px;">Model (A3)</div>
<svg style="left:47px;top:254.5px;width:10.5px;height:10.5px" viewBox="0 0 4.2 4.2"><rect x="0.3" y="0.3" width="3.6" height="3.6" fill="#fff" stroke="#8c8c8c" stroke-width="0.55"/><path d="M1 2.1H3.2" stroke="#333" stroke-width="0.55"/><path d="M2.1 1V3.2" stroke="#333" stroke-width="0.55"/></svg>
<svg style="left:67.5px;top:258.75px;width:11.5px;height:11px" viewBox="0 0 4.6 4.4"><path d="M0.4 2.6L1.6 3.8 4.2 0.4" fill="none" stroke="#22b030" stroke-width="0.9"/></svg>
<svg style="left:79px;top:249.75px;width:21px;height:19px" viewBox="0 0 8.4 7.6"><path d="M0.4 2.4L2.8 1l3 0.8V5L3.4 6.4 0.4 5.4z" fill="#3f49b8" stroke="#1c2468" stroke-width="0.4"/><path d="M0.4 2.4L3.4 3.4 5.8 1.8M3.4 3.4v3" stroke="#aeb6f2" stroke-width="0.35" fill="none"/><path d="M4 3.4L6 2.4l2 0.7V6L6.2 7.2 4 6.4z" fill="#5a66d2" stroke="#1c2468" stroke-width="0.4"/><path d="M4 3.4l2.2 0.8L8 3.1M6.2 4.2v3" stroke="#c6ccf8" stroke-width="0.35" fill="none"/></svg>
<div style="left:107px;top:251.925px;font-size:13.5px;line-height:15.65px;letter-spacing:-0.283px;">Geometry</div>
<svg style="left:47px;top:274.5px;width:10.5px;height:10.5px" viewBox="0 0 4.2 4.2"><rect x="0.3" y="0.3" width="3.6" height="3.6" fill="#fff" stroke="#8c8c8c" stroke-width="0.55"/><path d="M1 2.1H3.2" stroke="#333" stroke-width="0.55"/><path d="M2.1 1V3.2" stroke="#333" stroke-width="0.55"/></svg>
<svg style="left:67.5px;top:278.75px;width:11.5px;height:11px" viewBox="0 0 4.6 4.4"><path d="M0.4 2.6L1.6 3.8 4.2 0.4" fill="none" stroke="#22b030" stroke-width="0.9"/></svg>
<svg style="left:80px;top:269.75px;width:20px;height:19px" viewBox="0 0 8 7.6"><path d="M4 4.6V0.6" stroke="#2aa83a" stroke-width="0.8"/><path d="M4 4.6L0.6 7" stroke="#d03030" stroke-width="0.8"/><path d="M4 4.6L7.6 6.8" stroke="#3040d0" stroke-width="0.8"/><path d="M4 0L5 1.6H3z" fill="#2aa83a"/></svg>
<div style="left:107px;top:271.925px;font-size:13.5px;line-height:15.65px;letter-spacing:-0.155px;">Coordinate Systems</div>
<svg style="left:47px;top:294.5px;width:10.5px;height:10.5px" viewBox="0 0 4.2 4.2"><rect x="0.3" y="0.3" width="3.6" height="3.6" fill="#fff" stroke="#8c8c8c" stroke-width="0.55"/><path d="M1 2.1H3.2" stroke="#333" stroke-width="0.55"/></svg>
<svg style="left:67.5px;top:298.75px;width:11.5px;height:11px" viewBox="0 0 4.6 4.4"><path d="M0.4 2.6L1.6 3.8 4.2 0.4" fill="none" stroke="#22b030" stroke-width="0.9"/></svg>
<svg style="left:79px;top:289.75px;width:21px;height:19px" viewBox="0 0 8.4 7.6"><path d="M0.4 2.4L2.8 1l3 0.8V5L3.4 6.4 0.4 5.4z" fill="#3f49b8" stroke="#1c2468" stroke-width="0.4"/><path d="M0.4 2.4L3.4 3.4 5.8 1.8M3.4 3.4v3" stroke="#aeb6f2" stroke-width="0.35" fill="none"/><path d="M4 3.4L6 2.4l2 0.7V6L6.2 7.2 4 6.4z" fill="#5a66d2" stroke="#1c2468" stroke-width="0.4"/><path d="M4 3.4l2.2 0.8L8 3.1M6.2 4.2v3" stroke="#c6ccf8" stroke-width="0.35" fill="none"/></svg>
<div style="left:107px;top:291.925px;font-size:13.5px;line-height:15.65px;letter-spacing:-0.752px;">Mesh</div>
<svg style="left:103.5px;top:318.75px;width:11.5px;height:11px" viewBox="0 0 4.6 4.4"><path d="M0.4 2.6L1.6 3.8 4.2 0.4" fill="none" stroke="#22b030" stroke-width="0.9"/></svg>
<svg style="left:114px;top:309.75px;width:20px;height:20px" viewBox="0 0 8 8"><path d="M0.4 2.2L2.6 0.8l2.8 0.8V4.6L3.2 6 0.4 5z" fill="#3f49b8" stroke="#1c2468" stroke-width="0.4"/><path d="M0.4 2.2L3.2 3.2 5.4 1.6M3.2 3.2V6" stroke="#aeb6f2" stroke-width="0.35" fill="none"/><circle cx="4.8" cy="4.8" r="1.6" fill="#eaffea" stroke="#222" stroke-width="0.6"/><path d="M5.9 5.9L7.6 7.6" stroke="#111" stroke-width="0.9"/></svg>
<div style="left:139.5px;top:311.925px;font-size:13.5px;line-height:15.65px;letter-spacing:-0.46px;">Edge Sizing</div>
<svg style="left:103.5px;top:338.75px;width:11.5px;height:11px" viewBox="0 0 4.6 4.4"><path d="M0.4 2.6L1.6 3.8 4.2 0.4" fill="none" stroke="#22b030" stroke-width="0.9"/></svg>
<svg style="left:114px;top:329.75px;width:20px;height:20px" viewBox="0 0 8 8"><path d="M0.4 2.2L2.6 0.8l2.8 0.8V4.6L3.2 6 0.4 5z" fill="#3f49b8" stroke="#1c2468" stroke-width="0.4"/><path d="M0.4 2.2L3.2 3.2 5.4 1.6M3.2 3.2V6" stroke="#aeb6f2" stroke-width="0.35" fill="none"/><circle cx="4.8" cy="4.8" r="1.6" fill="#eaffea" stroke="#222" stroke-width="0.6"/><path d="M5.9 5.9L7.6 7.6" stroke="#111" stroke-width="0.9"/></svg>
<div style="left:139.5px;top:331.925px;font-size:13.5px;line-height:15.65px;letter-spacing:-0.255px;">Edge Sizing 2</div>
<svg style="left:103.5px;top:358.75px;width:11.5px;height:11px" viewBox="0 0 4.6 4.4"><path d="M0.4 2.6L1.6 3.8 4.2 0.4" fill="none" stroke="#22b030" stroke-width="0.9"/></svg>
<svg style="left:115px;top:350.75px;width:17.5px;height:18px" viewBox="0 0 7 7.2"><rect x="0.2" y="0.2" width="6.4" height="6.8" fill="#2a2aa8"/><path d="M2.3 0.2V7M4.5 0.2V7M0.2 2.4H6.6M0.2 4.7H6.6" stroke="#8a90e8" stroke-width="0.4"/></svg>
<div style="left:139.5px;top:351.925px;font-size:13.5px;line-height:15.65px;letter-spacing:-0.253px;">Face Meshing</div>
<svg style="left:47px;top:374.5px;width:10.5px;height:10.5px" viewBox="0 0 4.2 4.2"><rect x="0.3" y="0.3" width="3.6" height="3.6" fill="#fff" stroke="#8c8c8c" stroke-width="0.55"/><path d="M1 2.1H3.2" stroke="#333" stroke-width="0.55"/><path d="M2.1 1V3.2" stroke="#333" stroke-width="0.55"/></svg>
<svg style="left:79px;top:369.75px;width:21px;height:19.5px" viewBox="0 0 8.4 7.8"><path d="M0.6 2.6L3.2 1.2l3 0.9V5.4L3.8 7 0.6 5.8z" fill="#9aa0a6" stroke="#4a4e54" stroke-width="0.4"/><path d="M0.6 2.6L3.8 3.8 6.2 2.1M3.8 3.8V7" stroke="#e4e6ea" stroke-width="0.35" fill="none"/><path d="M3.8 3.8L6.2 2.1V5.4L3.8 7z" fill="#36b44a"/><path d="M5 0.4L8 1.4 6.4 3.2z" fill="#36b44a" stroke="#187a28" stroke-width="0.3"/></svg>
<div style="left:107px;top:371.925px;font-size:13.5px;line-height:15.65px;letter-spacing:-0.315px;">Named Selections</div>
<div class="hdr" style="left:0px;top:621px;width:455.75px;height:25px;"></div>
<div style="left:0px;top:645.5px;width:455.75px;height:2.5px;background:linear-gradient(#9fa3a8,#c9c9c9)"></div>
<div style="left:6px;top:626.475px;font-size:14.25px;line-height:16.525px;color:#37455a;letter-spacing:0.188px;">Details of "Mesh"</div>
<svg style="left:442px;top:627.5px;width:10px;height:11px" viewBox="0 0 4 4.4"><path d="M1.2 0.2h2v2.2l0.6 0.6H0.6l0.6-0.6z" fill="#333"/><path d="M2.2 3v1.4" stroke="#333" stroke-width="0.5"/></svg>
<div style="left:2.5px;top:647.5px;width:431px;height:341.25px;background:#fff"></div>
<div style="left:175.25px;top:827.9px;width:258.25px;height:22.55px;background:#dddcd7"></div>
<div style="left:175.25px;top:850.45px;width:258.25px;height:22.55px;background:#dddcd7"></div>
<div style="left:175.25px;top:895.55px;width:258.25px;height:22.55px;background:#dddcd7"></div>
<div style="left:175.25px;top:918.1px;width:258.25px;height:22.55px;background:#dddcd7"></div>
<div style="left:175.25px;top:940.65px;width:258.25px;height:22.55px;background:#dddcd7"></div>
<div style="left:175.25px;top:963.2px;width:258.25px;height:22.55px;background:#dddcd7"></div>
<div style="left:4px;top:646.875px;width:429.5px;height:1.25px;background:#b0b0b0"></div>
<div style="left:4px;top:669.425px;width:429.5px;height:1.25px;background:#b0b0b0"></div>
<div style="left:4px;top:691.975px;width:429.5px;height:1.25px;background:#b0b0b0"></div>
<div style="left:4px;top:714.525px;width:429.5px;height:1.25px;background:#b0b0b0"></div>
<div style="left:4px;top:737.075px;width:429.5px;height:1.25px;background:#b0b0b0"></div>
<div style="left:4px;top:759.625px;width:429.5px;height:1.25px;background:#b0b0b0"></div>
<div style="left:4px;top:782.175px;width:429.5px;height:1.25px;background:#b0b0b0"></div>
<div style="left:4px;top:804.725px;width:429.5px;height:1.25px;background:#b0b0b0"></div>
<div style="left:4px;top:827.275px;width:429.5px;height:1.25px;background:#b0b0b0"></div>
<div style="left:19px;top:849.825px;width:414.5px;height:1.25px;background:#b0b0b0"></div>
<div style="left:19px;top:872.375px;width:414.5px;height:1.25px;background:#b0b0b0"></div>
<div style="left:19px;top:894.925px;width:414.5px;height:1.25px;background:#b0b0b0"></div>
<div style="left:19px;top:917.475px;width:414.5px;height:1.25px;background:#b0b0b0"></div>
<div style="left:19px;top:940.025px;width:414.5px;height:1.25px;background:#b0b0b0"></div>
<div style="left:19px;top:962.575px;width:414.5px;height:1.25px;background:#b0b0b0"></div>
<div style="left:19px;top:985.125px;width:414.5px;height:1.25px;background:#b0b0b0"></div>
<div style="left:433px;top:647.5px;width:1.25px;height:338.25px;background:#b0b0b0"></div>
<div style="left:19px;top:647.5px;width:1.125px;height:180.4px;background:#c8c8c8"></div>
<div style="left:18.75px;top:827.9px;width:1.25px;height:157.85px;background:#9c9c9c"></div>
<div style="left:174.75px;top:827.9px;width:1.125px;height:157.85px;background:#b0b0b0"></div>
<div style="left:0.5px;top:646.5px;width:2.25px;height:342.75px;background:#666"></div>
<svg style="left:6px;top:655.375px;width:10.5px;height:10.5px" viewBox="0 0 4.2 4.2"><rect x="0.3" y="0.3" width="3.6" height="3.6" fill="#fff" stroke="#8c8c8c" stroke-width="0.55"/><path d="M1 2.1H3.2" stroke="#333" stroke-width="0.55"/><path d="M2.1 1V3.2" stroke="#333" stroke-width="0.55"/></svg>
<div style="left:25px;top:652.8px;font-size:13.5px;line-height:15.65px;color:#111;font-weight:bold;letter-spacing:-0.375px;">Sizing</div>
<svg style="left:6px;top:677.875px;width:10.5px;height:10.5px" viewBox="0 0 4.2 4.2"><rect x="0.3" y="0.3" width="3.6" height="3.6" fill="#fff" stroke="#8c8c8c" stroke-width="0.55"/><path d="M1 2.1H3.2" stroke="#333" stroke-width="0.55"/><path d="M2.1 1V3.2" stroke="#333" stroke-width="0.55"/></svg>
<div style="left:25px;top:675.3px;font-size:13.5px;line-height:15.65px;color:#111;font-weight:bold;letter-spacing:0.14px;">Inflation</div>
<svg style="left:6px;top:700.375px;width:10.5px;height:10.5px" viewBox="0 0 4.2 4.2"><rect x="0.3" y="0.3" width="3.6" height="3.6" fill="#fff" stroke="#8c8c8c" stroke-width="0.55"/><path d="M1 2.1H3.2" stroke="#333" stroke-width="0.55"/><path d="M2.1 1V3.2" stroke="#333" stroke-width="0.55"/></svg>
<div style="left:25px;top:697.8px;font-size:13.5px;line-height:15.65px;color:#111;font-weight:bold;letter-spacing:0.013px;">Assembly Meshing</div>
<svg style="left:6px;top:722.875px;width:10.5px;height:10.5px" viewBox="0 0 4.2 4.2"><rect x="0.3" y="0.3" width="3.6" height="3.6" fill="#fff" stroke="#8c8c8c" stroke-width="0.55"/><path d="M1 2.1H3.2" stroke="#333" stroke-width="0.55"/><path d="M2.1 1V3.2" stroke="#333" stroke-width="0.55"/></svg>
<div style="left:25px;top:720.3px;font-size:13.5px;line-height:15.65px;color:#111;font-weight:bold;letter-spacing:0.073px;">Patch Conforming Options</div>
<svg style="left:6px;top:745.375px;width:10.5px;height:10.5px" viewBox="0 0 4.2 4.2"><rect x="0.3" y="0.3" width="3.6" height="3.6" fill="#fff" stroke="#8c8c8c" stroke-width="0.55"/><path d="M1 2.1H3.2" stroke="#333" stroke-width="0.55"/><path d="M2.1 1V3.2" stroke="#333" stroke-width="0.55"/></svg>
<div style="left:25px;top:742.8px;font-size:13.5px;line-height:15.65px;color:#111;font-weight:bold;letter-spacing:0.13px;">Patch Independent Options</div>
<svg style="left:6px;top:767.875px;width:10.5px;height:10.5px" viewBox="0 0 4.2 4.2"><rect x="0.3" y="0.3" width="3.6" height="3.6" fill="#fff" stroke="#8c8c8c" stroke-width="0.55"/><path d="M1 2.1H3.2" stroke="#333" stroke-width="0.55"/><path d="M2.1 1V3.2" stroke="#333" stroke-width="0.55"/></svg>
<div style="left:25px;top:765.3px;font-size:13.5px;line-height:15.65px;color:#111;font-weight:bold;letter-spacing:-0.003px;">Advanced</div>
<svg style="left:6px;top:790.375px;width:10.5px;height:10.5px" viewBox="0 0 4.2 4.2"><rect x="0.3" y="0.3" width="3.6" height="3.6" fill="#fff" stroke="#8c8c8c" stroke-width="0.55"/><path d="M1 2.1H3.2" stroke="#333" stroke-width="0.55"/><path d="M2.1 1V3.2" stroke="#333" stroke-width="0.55"/></svg>
<div style="left:25px;top:787.8px;font-size:13.5px;line-height:15.65px;color:#111;font-weight:bold;letter-spacing:0.273px;">Defeaturing</div>
<svg style="left:6px;top:812.875px;width:10.5px;height:10.5px" viewBox="0 0 4.2 4.2"><rect x="0.3" y="0.3" width="3.6" height="3.6" fill="#fff" stroke="#8c8c8c" stroke-width="0.55"/><path d="M1 2.1H3.2" stroke="#333" stroke-width="0.55"/></svg>
<div style="left:25px;top:810.3px;font-size:13.5px;line-height:15.65px;color:#111;font-weight:bold;letter-spacing:-0.403px;">Statistics</div>
<div style="left:26.5px;top:833.625px;width:13.5px;height:14px;background:#fff;border:1px solid #d8d8d8"></div>
<div style="left:44.75px;top:832.8px;font-size:13.5px;line-height:15.65px;color:#222;letter-spacing:0.045px;">Nodes</div>
<div style="left:179.25px;top:832.8px;font-size:13.5px;line-height:15.65px;color:#333;">23829</div>
<div style="left:26.5px;top:856.125px;width:13.5px;height:14px;background:#fff;border:1px solid #d8d8d8"></div>
<div style="left:44.75px;top:855.3px;font-size:13.5px;line-height:15.65px;color:#222;letter-spacing:-0.098px;">Elements</div>
<div style="left:179.25px;top:855.3px;font-size:13.5px;line-height:15.65px;color:#333;">23322</div>
<div style="left:25px;top:877.8px;font-size:13.5px;line-height:15.65px;color:#222;letter-spacing:0.453px;">Mesh Metric</div>
<div style="left:179.25px;top:877.8px;font-size:13.5px;line-height:15.65px;color:#222;">Aspect Ratio</div>
<div style="left:26.5px;top:901.125px;width:13.5px;height:14px;background:#fff;border:1px solid #d8d8d8"></div>
<div style="left:44.75px;top:900.3px;font-size:13.5px;line-height:15.65px;color:#222;letter-spacing:0.833px;">Min</div>
<div style="left:179.25px;top:900.3px;font-size:13.5px;line-height:15.65px;color:#333;">1.0003</div>
<div style="left:26.5px;top:923.625px;width:13.5px;height:14px;background:#fff;border:1px solid #d8d8d8"></div>
<div style="left:44.75px;top:922.8px;font-size:13.5px;line-height:15.65px;color:#222;letter-spacing:0.083px;">Max</div>
<div style="left:179.25px;top:922.8px;font-size:13.5px;line-height:15.65px;color:#333;">2.3477</div>
<div style="left:26.5px;top:946.125px;width:13.5px;height:14px;background:#fff;border:1px solid #d8d8d8"></div>
<div style="left:44.75px;top:945.3px;font-size:13.5px;line-height:15.65px;color:#222;letter-spacing:-0.005px;">Average</div>
<div style="left:179.25px;top:945.3px;font-size:13.5px;line-height:15.65px;color:#333;">1.415</div>
<div style="left:26.5px;top:968.625px;width:13.5px;height:14px;background:#fff;border:1px solid #d8d8d8"></div>
<div style="left:44.75px;top:967.8px;font-size:13.5px;line-height:15.65px;color:#222;letter-spacing:0.413px;">Standard Deviation</div>
<div style="left:179.25px;top:967.8px;font-size:13.5px;line-height:15.65px;color:#333;">0.24957</div>
<div style="left:443.25px;top:754px;width:4.25px;height:215px;background:#bcbcbc;border-radius:2px"></div>
<!-- s_view -->
<div style="left:463.5px;top:151.5px;width:1456.5px;height:531.5px;background:linear-gradient(#6a8adc,#ffffff);"></div>
<div style="left:462.5px;top:151px;width:1.5px;height:532.5px;background:#5a5a5a"></div>
<div style="left:462.5px;top:150.75px;width:1457.5px;height:1.25px;background:#9a9a9a"></div>
<svg style="left:463.5px;top:151.5px;width:1456.5px;height:531.5px" viewBox="185.4 60.6 582.6 212.6"><defs><clipPath id="mc"><path clip-rule="evenodd" d="M381.3 71.7H572.8V263.5H381.3z M419.79999999999995 167.5a57.6 57.6 0 1 0 115.2 0a57.6 57.6 0 1 0 -115.2 0z"/></clipPath><pattern id="gp" width="1.3" height="1.3" patternUnits="userSpaceOnUse"><rect width="1.3" height="1.3" fill="#1c1c1c"/><path d="M0 0H1.3M0 0V1.3" stroke="#383838" stroke-width="0.35"/></pattern><filter id="nz" x="0" y="0" width="1" height="1" color-interpolation-filters="sRGB"><feTurbulence type="fractalNoise" baseFrequency="0.62" numOctaves="2" seed="7" result="t"/><feColorMatrix in="t" type="matrix" values="0 0 0 0 1  0 0 0 0 1  0 0 0 0 1  2.2 0 0 0 -0.95"/></filter></defs><g clip-path="url(#mc)"><rect x="381.3" y="71.7" width="191.49999999999994" height="191.8" fill="url(#gp)"/><rect x="381.3" y="71.7" width="191.49999999999994" height="191.8" fill="#fff" filter="url(#nz)" opacity="0.2"/><path d="M381.3 71.7Q387.8 120.4 436.7 126.8Q430.2 78.0 381.3 71.7z" fill="#fff" fill-opacity="0.03"/><path d="M572.8 71.7Q566.7 120.4 518.1 126.8Q524.3 78.0 572.8 71.7z" fill="#fff" fill-opacity="0.03"/><path d="M381.3 263.5Q387.8 214.7 436.7 208.2Q430.2 257.1 381.3 263.5z" fill="#fff" fill-opacity="0.03"/><path d="M572.8 263.5Q566.7 214.7 518.1 208.2Q524.3 257.1 572.8 263.5z" fill="#fff" fill-opacity="0.03"/><path fill="none" stroke="#ececec" stroke-opacity="0.62" stroke-width="0.45" stroke-dasharray="1.2 0.5" d="M381.3 71.7Q409.0 99.2 436.7 126.8M572.8 71.7Q545.5 99.2 518.1 126.8M381.3 263.5Q409.0 235.9 436.7 208.2M572.8 263.5Q545.5 235.9 518.1 208.2"/><path fill="none" stroke="#ececec" stroke-opacity="0.33" stroke-width="0.45" stroke-dasharray="0.8 0.6" d="M381.3 71.7Q412.9 95.3 436.7 126.8M381.3 71.7Q405.0 103.2 436.7 126.8M572.8 71.7Q541.5 95.3 518.1 126.8M572.8 71.7Q549.4 103.2 518.1 126.8M381.3 263.5Q412.9 239.8 436.7 208.2M381.3 263.5Q405.0 231.9 436.7 208.2M572.8 263.5Q541.5 239.8 518.1 208.2M572.8 263.5Q549.4 231.9 518.1 208.2"/><path fill="none" stroke="#ececec" stroke-opacity="0.51" stroke-width="0.45" stroke-dasharray="1.2 0.5" d="M381.3 71.7Q416.9 91.3 436.7 126.8M381.3 71.7Q401.1 107.2 436.7 126.8M572.8 71.7Q537.5 91.3 518.1 126.8M572.8 71.7Q553.4 107.2 518.1 126.8M381.3 263.5Q416.9 243.8 436.7 208.2M381.3 263.5Q401.1 227.9 436.7 208.2M572.8 263.5Q537.5 243.8 518.1 208.2M572.8 263.5Q553.4 227.9 518.1 208.2"/><path fill="none" stroke="#ececec" stroke-opacity="0.26" stroke-width="0.45" stroke-dasharray="0.8 0.6" d="M381.3 71.7Q420.9 87.4 436.7 126.8M381.3 71.7Q397.1 111.1 436.7 126.8M572.8 71.7Q533.6 87.4 518.1 126.8M572.8 71.7Q557.3 111.1 518.1 126.8M381.3 263.5Q420.9 247.7 436.7 208.2M381.3 263.5Q397.1 224.0 436.7 208.2M572.8 263.5Q533.6 247.7 518.1 208.2M572.8 263.5Q557.3 224.0 518.1 208.2"/><path fill="none" stroke="#ececec" stroke-opacity="0.39" stroke-width="0.45" stroke-dasharray="1.2 0.5" d="M381.3 71.7Q424.8 83.4 436.7 126.8M381.3 71.7Q393.1 115.1 436.7 126.8M572.8 71.7Q529.6 83.4 518.1 126.8M572.8 71.7Q561.3 115.1 518.1 126.8M381.3 263.5Q424.8 251.7 436.7 208.2M381.3 263.5Q393.1 220.0 436.7 208.2M572.8 263.5Q529.6 251.7 518.1 208.2M572.8 263.5Q561.3 220.0 518.1 208.2"/><path fill="none" stroke="#ececec" stroke-opacity="0.20" stroke-width="0.45" stroke-dasharray="0.8 0.6" d="M381.3 71.7Q428.8 79.4 436.7 126.8M381.3 71.7Q389.2 119.0 436.7 126.8M572.8 71.7Q525.7 79.4 518.1 126.8M572.8 71.7Q565.3 119.0 518.1 126.8M381.3 263.5Q428.8 255.7 436.7 208.2M381.3 263.5Q389.2 216.1 436.7 208.2M572.8 263.5Q525.7 255.7 518.1 208.2M572.8 263.5Q565.3 216.1 518.1 208.2"/><path fill="none" stroke="#ececec" stroke-opacity="0.28" stroke-width="0.45" stroke-dasharray="1.2 0.5" d="M381.3 71.7Q432.7 75.5 436.7 126.8M381.3 71.7Q385.2 123.0 436.7 126.8M572.8 71.7Q521.7 75.5 518.1 126.8M572.8 71.7Q569.2 123.0 518.1 126.8M381.3 263.5Q432.7 259.6 436.7 208.2M381.3 263.5Q385.2 212.1 436.7 208.2M572.8 263.5Q521.7 259.6 518.1 208.2M572.8 263.5Q569.2 212.1 518.1 208.2"/><g fill="none" stroke="#000" stroke-opacity="0.4" stroke-width="0.9"><ellipse cx="477.4" cy="71.7" rx="10.4" ry="6.2"/><ellipse cx="477.4" cy="263.5" rx="10.4" ry="6.2"/><ellipse cx="381.3" cy="167.5" rx="6.2" ry="10.4"/><ellipse cx="572.8" cy="167.5" rx="6.2" ry="10.4"/><ellipse cx="477.4" cy="71.7" rx="20.8" ry="12.4"/><ellipse cx="477.4" cy="263.5" rx="20.8" ry="12.4"/><ellipse cx="381.3" cy="167.5" rx="12.4" ry="20.8"/><ellipse cx="572.8" cy="167.5" rx="12.4" ry="20.8"/><ellipse cx="477.4" cy="71.7" rx="31.2" ry="18.6"/><ellipse cx="477.4" cy="263.5" rx="31.2" ry="18.6"/><ellipse cx="381.3" cy="167.5" rx="18.6" ry="31.2"/><ellipse cx="572.8" cy="167.5" rx="18.6" ry="31.2"/><ellipse cx="477.4" cy="71.7" rx="41.6" ry="24.8"/><ellipse cx="477.4" cy="263.5" rx="41.6" ry="24.8"/><ellipse cx="381.3" cy="167.5" rx="24.8" ry="41.6"/><ellipse cx="572.8" cy="167.5" rx="24.8" ry="41.6"/><ellipse cx="477.4" cy="71.7" rx="52.0" ry="31.0"/><ellipse cx="477.4" cy="263.5" rx="52.0" ry="31.0"/><ellipse cx="381.3" cy="167.5" rx="31.0" ry="52.0"/><ellipse cx="572.8" cy="167.5" rx="31.0" ry="52.0"/><ellipse cx="477.4" cy="71.7" rx="62.4" ry="37.2"/><ellipse cx="477.4" cy="263.5" rx="62.4" ry="37.2"/><ellipse cx="381.3" cy="167.5" rx="37.2" ry="62.4"/><ellipse cx="572.8" cy="167.5" rx="37.2" ry="62.4"/></g><g fill="none" stroke="#e0e0e0" stroke-opacity="0.42" stroke-width="0.45" stroke-dasharray="0.9 0.6"><ellipse cx="477.4" cy="71.7" rx="15.6" ry="9.3"/><ellipse cx="477.4" cy="263.5" rx="15.6" ry="9.3"/><ellipse cx="381.3" cy="167.5" rx="9.3" ry="15.6"/><ellipse cx="572.8" cy="167.5" rx="9.3" ry="15.6"/><ellipse cx="477.4" cy="71.7" rx="26.0" ry="15.5"/><ellipse cx="477.4" cy="263.5" rx="26.0" ry="15.5"/><ellipse cx="381.3" cy="167.5" rx="15.5" ry="26.0"/><ellipse cx="572.8" cy="167.5" rx="15.5" ry="26.0"/><ellipse cx="477.4" cy="71.7" rx="36.4" ry="21.7"/><ellipse cx="477.4" cy="263.5" rx="36.4" ry="21.7"/><ellipse cx="381.3" cy="167.5" rx="21.7" ry="36.4"/><ellipse cx="572.8" cy="167.5" rx="21.7" ry="36.4"/><ellipse cx="477.4" cy="71.7" rx="46.8" ry="27.9"/><ellipse cx="477.4" cy="263.5" rx="46.8" ry="27.9"/><ellipse cx="381.3" cy="167.5" rx="27.9" ry="46.8"/><ellipse cx="572.8" cy="167.5" rx="27.9" ry="46.8"/><ellipse cx="477.4" cy="71.7" rx="57.2" ry="34.1"/><ellipse cx="477.4" cy="263.5" rx="57.2" ry="34.1"/><ellipse cx="381.3" cy="167.5" rx="34.1" ry="57.2"/><ellipse cx="572.8" cy="167.5" rx="34.1" ry="57.2"/></g><g fill="none" stroke="#000" stroke-opacity="0.35" stroke-width="0.8"><circle cx="477.4" cy="167.5" r="59.1"/><circle cx="477.4" cy="167.5" r="60.6"/><circle cx="477.4" cy="167.5" r="62.1"/><circle cx="477.4" cy="167.5" r="63.6"/><circle cx="477.4" cy="167.5" r="65.1"/><circle cx="477.4" cy="167.5" r="66.6"/><circle cx="477.4" cy="167.5" r="68.1"/></g><g fill="none" stroke="#aaa" stroke-opacity="0.22" stroke-width="0.4" stroke-dasharray="0.6 0.6"><rect x="382.8" y="73.2" width="188.5" height="188.8"/><rect x="384.3" y="74.7" width="185.5" height="185.8"/><rect x="385.8" y="76.2" width="182.5" height="182.8"/></g></g><rect x="381.3" y="71.7" width="191.49999999999994" height="191.8" fill="none" stroke="#1a1a1a" stroke-width="0.8"/><circle cx="477.4" cy="167.5" r="57.6" fill="none" stroke="#1f1f1f" stroke-width="0.9"/><rect x="383.2" y="254.4" width="47.4" height="3.4" fill="#000" fill-opacity="0.8"/><rect x="430.59999999999997" y="254.4" width="47.4" height="3.4" fill="#fff" fill-opacity="0.10"/><rect x="478.0" y="254.4" width="47.4" height="3.4" fill="#000" fill-opacity="0.8"/><rect x="525.4" y="254.4" width="47.4" height="3.4" fill="#fff" fill-opacity="0.10"/></svg>
<div style="left:935.5px;top:618px;font-size:12.5px;line-height:14.5px;color:#333;">0.000</div>
<div style="left:1418.5px;top:618px;font-size:12.5px;line-height:14.5px;color:#333;letter-spacing:0.278px;">0.100 (m)</div>
<div style="left:1167.5px;top:616.75px;font-size:12.5px;line-height:14.5px;color:#555;opacity:0.5;">0.050</div>
<div style="left:1050px;top:648.75px;font-size:12.5px;line-height:14.5px;color:#555;opacity:0.5;">0.025</div>
<div style="left:1290px;top:648.75px;font-size:12.5px;line-height:14.5px;color:#555;opacity:0.5;">0.075</div>
<div style="left:1787px;top:180px;font-size:35.75px;line-height:40px;font-weight:bold;color:#fff;letter-spacing:1.25px;transform:scaleX(0.82);transform-origin:0 0;">ANSYS</div>
<div style="left:1849px;top:215.75px;font-size:21px;line-height:22.5px;font-weight:bold;color:#e9eefa;">16.0</div>
<svg style="left:463.5px;top:151.5px;width:1456.5px;height:531.5px" viewBox="185.4 60.6 582.6 212.6"><path d="M724.4 235V212h1.9V235z" fill="#118a1d"/><path d="M721.8 212.4L725.3 204l3.6 8.4z" fill="#139420"/><path d="M725 234.4H749.4v1.9H725z" fill="#c2181a"/><path d="M749 231.8l7.6 3.5-7.6 3.6z" fill="#cf1b1b"/><radialGradient id="bb" cx="0.4" cy="0.35" r="0.7"><stop offset="0" stop-color="#3a44e0"/><stop offset="1" stop-color="#070a7a"/></radialGradient><circle cx="725.4" cy="235.4" r="3" fill="url(#bb)"/><radialGradient id="cb" cx="0.4" cy="0.35" r="0.7"><stop offset="0" stop-color="#6fe6e6"/><stop offset="1" stop-color="#12a3a8"/></radialGradient><circle cx="739.9" cy="221.2" r="3.3" fill="url(#cb)"/></svg>
<div style="left:1814px;top:486.05px;font-size:12px;line-height:13.925px;color:#6cc277;">Y</div>
<div style="left:1903px;top:576.3px;font-size:12px;line-height:13.925px;color:#e8767c;">X</div>
<!-- s_metrics -->
<div style="left:462.5px;top:683px;width:1457.5px;height:30.5px;background:#f0f0f0"></div>
<svg style="left:462.5px;top:675px;width:1457.5px;height:40px" viewBox="185 270 583 16"><path d="M185.8 273.0L189.6 281.6H220.6L224 273.0z" fill="#fff"/><path d="M185.3 270V273.0L189.6 281.6H220.6L224 273.6" fill="none" stroke="#333" stroke-width="0.65"/><path d="M224 273.6H262.4M224 273.6L221.8 279.0" fill="none" stroke="#555" stroke-width="0.45"/><path d="M224 273.8L222.6 281.6H258.6L262.6 273.6L265 281.6H304.6L309.6 273.6" fill="none" stroke="#444" stroke-width="0.5"/><path d="M262.6 273.6H767V281.6H306" fill="none" stroke="#6e6e6e" stroke-width="0.6"/></svg>
<div style="left:478px;top:687.925px;font-size:13.5px;line-height:15.65px;color:#111;font-weight:bold;letter-spacing:0.902px;">Geometry</div>
<div style="left:564.5px;top:687.575px;font-size:13.25px;line-height:15.375px;color:#222;letter-spacing:0.438px;">Print Preview</div>
<div style="left:666.5px;top:687.575px;font-size:13.25px;line-height:15.375px;color:#222;letter-spacing:0.352px;">Report Preview</div>
<div class="hdr" style="left:462.5px;top:713.5px;width:1457.5px;height:24px;"></div>
<div style="left:462.5px;top:737px;width:1457.5px;height:2.25px;background:linear-gradient(#9fa3a8,#c9c9c9)"></div>
<div style="left:468px;top:717.375px;font-size:14px;line-height:16.25px;color:#37455a;letter-spacing:0.375px;">Mesh Metrics</div>
<svg style="left:1888px;top:719.5px;width:9px;height:11.5px" viewBox="0 0 3.6 4.6"><path d="M1 0.2h1.8v2.2l0.6 0.6H0.4l0.6-0.6z" fill="#222"/><path d="M1.9 3v1.6" stroke="#222" stroke-width="0.5"/></svg>
<svg style="left:1907px;top:720.5px;width:9px;height:9px" viewBox="0 0 3.6 3.6"><path d="M0.3 0.3L3.3 3.3M3.3 0.3L0.3 3.3" stroke="#111" stroke-width="0.8"/></svg>
<div style="left:463px;top:738.75px;width:1457px;height:222.5px;background:#fff;border-left:1.25px solid #9a9a9a"></div>
<div style="left:477.5px;top:759.5px;width:92px;height:29px;background:#e9e9e9;border:1px solid #dadada;border-right:2.25px solid #8e8e8e;border-bottom:2.25px solid #8e8e8e"></div>
<div style="left:492.5px;top:765.725px;font-size:16px;line-height:18.55px;color:#222;letter-spacing:0.115px;">Controls</div>
<div style="left:515px;top:882.5px;width:0;height:0;"><div style="left:-100px;top:-9px;width:200px;height:18px;line-height:18px;text-align:center;font-size:15px;font-weight:bold;color:#111;transform:rotate(-90deg);">Number of Elements</div></div>
<div style="left:595px;top:828px;width:123.5px;height:25.5px;background:#fff;border:2.25px solid #3c3c3c"></div>
<div style="left:602.5px;top:838.5px;width:60.5px;height:3.375px;background:#fdfd00"></div>
<svg style="left:627px;top:834.5px;width:11px;height:11px" viewBox="0 0 4.4 4.4"><circle cx="2.2" cy="2.2" r="1.75" fill="#d8d800" stroke="#55550a" stroke-width="0.75"/></svg>
<div style="left:670px;top:833.075px;font-size:13.25px;line-height:15.375px;color:#333;letter-spacing:0.643px;">Quad4</div>
<div style="left:525.5px;top:865.95px;font-size:13px;line-height:15.075px;color:#333;letter-spacing:0.43px;">4822.00</div>
<div style="left:577.5px;top:872.5px;width:12.5px;height:1.125px;background:#777"></div>
<div style="left:589.25px;top:872.25px;width:1268.75px;height:21.5px;background:#fff;border:2.125px solid #454545"></div>
<div style="left:588.75px;top:894px;width:1.125px;height:7px;background:#b4b4b4"></div>
<div style="left:823.704px;top:877px;width:1.125px;height:16px;background:repeating-linear-gradient(180deg,#9a9a9a 0 2px,transparent 2px 3.25px)"></div>
<div style="left:823.704px;top:894px;width:1.125px;height:7px;background:#b4b4b4"></div>
<div style="left:1058.657px;top:877px;width:1.125px;height:16px;background:repeating-linear-gradient(180deg,#9a9a9a 0 2px,transparent 2px 3.25px)"></div>
<div style="left:1058.657px;top:894px;width:1.125px;height:7px;background:#b4b4b4"></div>
<div style="left:1293.611px;top:877px;width:1.125px;height:16px;background:repeating-linear-gradient(180deg,#9a9a9a 0 2px,transparent 2px 3.25px)"></div>
<div style="left:1293.611px;top:894px;width:1.125px;height:7px;background:#b4b4b4"></div>
<div style="left:1528.565px;top:877px;width:1.125px;height:16px;background:repeating-linear-gradient(180deg,#9a9a9a 0 2px,transparent 2px 3.25px)"></div>
<div style="left:1528.565px;top:894px;width:1.125px;height:7px;background:#b4b4b4"></div>
<div style="left:1763.519px;top:877px;width:1.125px;height:16px;background:repeating-linear-gradient(180deg,#9a9a9a 0 2px,transparent 2px 3.25px)"></div>
<div style="left:1763.519px;top:894px;width:1.125px;height:7px;background:#b4b4b4"></div>
<div style="left:1857.5px;top:894px;width:1.125px;height:7px;background:#b4b4b4"></div>
<div style="left:635.438px;top:877.5px;width:34.5px;height:15px;background:#ffff00;border:1.25px solid #6e6e10;"></div>
<div style="left:762.312px;top:873px;width:34.5px;height:19.5px;background:#ffff00;border:1.25px solid #6e6e10;"></div>
<div style="left:889.188px;top:873px;width:34.5px;height:19.5px;background:#ffff00;border:1.25px solid #6e6e10;"></div>
<div style="left:1016.063px;top:874px;width:34.5px;height:18.5px;background:#ffff00;border:1.25px solid #6e6e10;"></div>
<div style="left:1142.938px;top:877.5px;width:34.5px;height:15px;background:#ffff00;border:1.25px solid #6e6e10;"></div>
<div style="left:1269.813px;top:882.5px;width:34.5px;height:10px;background:#ffff00;border:1.25px solid #6e6e10;"></div>
<div style="left:1396.688px;top:886px;width:34.5px;height:6.5px;background:#ffff00;border:1.25px solid #6e6e10;"></div>
<div style="left:1523.563px;top:887.5px;width:34.5px;height:5px;background:#ffff00;border:1.25px solid #6e6e10;border-width:1px;"></div>
<div style="left:1650.438px;top:888.75px;width:34.5px;height:3.75px;background:#ffff00;border:1.25px solid #6e6e10;border-width:1px;"></div>
<div style="left:1777.313px;top:890.25px;width:34.5px;height:2.25px;background:#4a4a4a;border:1.25px solid #6e6e10;border-width:1px;"></div>
<div style="left:564.25px;top:905.25px;width:50px;text-align:center;font-size:13.75px;line-height:15.5px;color:#333;">1.00</div>
<div style="left:799.25px;top:905.25px;width:50px;text-align:center;font-size:13.75px;line-height:15.5px;color:#333;">1.25</div>
<div style="left:1034.25px;top:905.25px;width:50px;text-align:center;font-size:13.75px;line-height:15.5px;color:#333;">1.50</div>
<div style="left:1269px;top:905.25px;width:50px;text-align:center;font-size:13.75px;line-height:15.5px;color:#333;">1.75</div>
<div style="left:1504px;top:905.25px;width:50px;text-align:center;font-size:13.75px;line-height:15.5px;color:#333;">2.00</div>
<div style="left:1739px;top:905.25px;width:50px;text-align:center;font-size:13.75px;line-height:15.5px;color:#333;">2.25</div>
<div style="left:1833px;top:905.25px;width:50px;text-align:center;font-size:13.75px;line-height:15.5px;color:#333;">2.35</div>
<div style="left:1167px;top:933.525px;font-size:13.75px;line-height:15.95px;color:#111;font-weight:bold;letter-spacing:0.503px;">Element Metrics</div>
<div style="left:1899.5px;top:739px;width:20.5px;height:222.5px;background:#f0f0f0"></div>
<svg style="left:1903px;top:762.5px;width:14px;height:8px" viewBox="0 0 5.6 3.2"><path d="M0.4 3L2.8 0.6 5.2 3" fill="none" stroke="#444" stroke-width="1"/></svg>
<svg style="left:1903px;top:929.5px;width:14px;height:8px" viewBox="0 0 5.6 3.2"><path d="M0.4 0.2L2.8 2.6 5.2 0.2" fill="none" stroke="#444" stroke-width="1"/></svg>
<div style="left:1901.5px;top:783.5px;width:18.5px;height:77px;background:#c8c8c8"></div>
<div style="left:462.5px;top:961.25px;width:1457.5px;height:31.25px;background:#f0f0f0"></div>
<svg style="left:462.5px;top:957.5px;width:300px;height:35px" viewBox="185 383 120 14"><path d="M186.6 384.6L193.4 395.6H225.6" fill="none" stroke="#d0d0d0" stroke-width="0.5"/><path d="M224.2 384.6L228.6 395.6H270.2V384.6z" fill="#f7f7f7"/><path d="M221 387L228.6 395.6H270.2V385" fill="none" stroke="#bdbdbd" stroke-width="0.6"/></svg>
<div style="left:495px;top:967.325px;font-size:13.25px;line-height:15.375px;color:#4a4a4a;letter-spacing:0.265px;">Messages</div>
<div style="left:575.5px;top:967.325px;font-size:13.25px;line-height:15.375px;color:#111;font-weight:bold;letter-spacing:0.67px;">Mesh Metrics</div>
<!-- s_status -->
<div style="left:0px;top:992.5px;width:1920px;height:30px;background:#f0f0f0"></div>
<div style="left:0px;top:991.5px;width:462.5px;height:4.5px;background:#dedede"></div>
<div style="left:0px;top:996px;width:1920px;height:1.25px;background:#d4d4d4"></div>
<div style="left:0px;top:997.5px;width:2px;height:23.5px;background:#b0b0b0"></div>
<div style="left:521px;top:998.5px;width:1.125px;height:21px;background:#b9b9b9"></div>
<div style="left:771px;top:998.5px;width:1.125px;height:21px;background:#b9b9b9"></div>
<div style="left:978px;top:998.5px;width:1.125px;height:21px;background:#b9b9b9"></div>
<div style="left:1444px;top:998.5px;width:1.125px;height:21px;background:#b9b9b9"></div>
<div style="left:1893px;top:998.5px;width:1.125px;height:21px;background:#b9b9b9"></div>
<svg style="left:773.5px;top:1000.25px;width:21px;height:20px" viewBox="0 0 8.4 8"><path d="M0.6 3.4H5.4V6.2H2.4L0.8 7.6 1.2 6.2H0.6z" fill="#f0c43a" stroke="#b08a10" stroke-width="0.3"/><circle cx="5.2" cy="2.8" r="2.5" fill="#2b4fd0" stroke="#16287a" stroke-width="0.4"/><path d="M5.2 1.3v0.7M5.2 2.6v1.8" stroke="#fff" stroke-width="0.8"/></svg>
<div style="left:800px;top:1002.575px;font-size:13.25px;line-height:15.375px;color:#222;letter-spacing:0.383px;">1 Message</div>
<div style="left:985px;top:1002.575px;font-size:13.25px;line-height:15.375px;color:#222;letter-spacing:0.823px;">No Selection</div>
<div style="left:1450px;top:1002.425px;font-size:13.5px;line-height:15.65px;color:#222;letter-spacing:0.48px;">Metric (m, kg, N, s, V, A)</div>
<div style="left:1623.5px;top:1002.425px;font-size:13.5px;line-height:15.65px;color:#222;letter-spacing:0.138px;">Degrees</div>
<div style="left:1690.5px;top:1002.575px;font-size:13.25px;line-height:15.375px;color:#222;letter-spacing:0.907px;">rad/s</div>
<div style="left:1739px;top:1002.575px;font-size:13.25px;line-height:15.375px;color:#222;letter-spacing:0.365px;">Celsius</div>
<svg style="left:1902.5px;top:1004px;width:16px;height:16px" viewBox="0 0 6.4 6.4"><path d="M6 0.6L0.6 6M6 3L3 6M6 5L5 6" stroke="#b4b4b4" stroke-width="0.5"/></svg>
<div style="left:0px;top:1019.5px;width:1920px;height:3px;background:#d3e3f3"></div></div>
</body>
</html>
